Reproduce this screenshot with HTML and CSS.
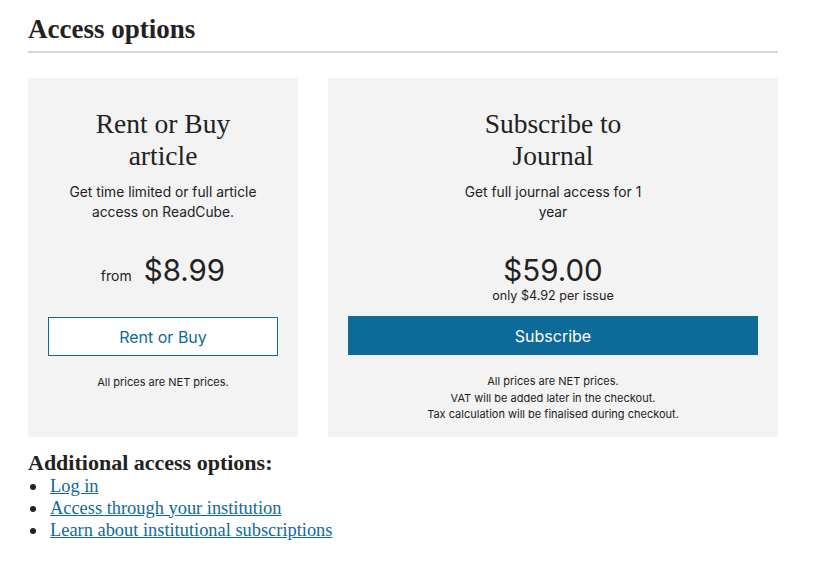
FILE: index.html
```html
<!DOCTYPE html>
<html>
<head>
<meta charset="utf-8">
<link rel="stylesheet" href="styles.css">
</head>
<body>
<section class="access">
  <h2 class="access-title">Access options</h2>
  <div class="cards">
    <div class="card card-rent">
      <h3 class="card-title">Rent or Buy<br>article</h3>
      <p class="card-desc">Get time limited or full article<br>access on ReadCube.</p>
      <div class="price-block">
        <div class="price-line"><span class="from">from</span><span class="price">$8.99</span></div>
      </div>
      <a class="btn btn-outline" href="#">Rent or Buy</a>
      <p class="note">All prices are NET prices.</p>
    </div>
    <div class="card card-sub">
      <h3 class="card-title">Subscribe to<br>Journal</h3>
      <p class="card-desc">Get full journal access for 1<br>year</p>
      <div class="price-block">
        <div class="price-line"><span class="price">$59.00</span></div>
        <div class="per-issue">only $4.92 per issue</div>
      </div>
      <a class="btn btn-solid" href="#">Subscribe</a>
      <p class="note">All prices are NET prices.<br>VAT will be added later in the checkout.<br>Tax calculation will be finalised during checkout.</p>
    </div>
  </div>
  <h3 class="more-title">Additional access options:</h3>
  <ul class="more-list">
    <li><a href="#">Log in</a></li>
    <li><a href="#">Access through your institution</a></li>
    <li><a href="#">Learn about institutional subscriptions</a></li>
  </ul>
</section>
</body>
</html>
```

FILE: styles.css
```css
* { box-sizing: border-box; }
html, body { margin: 0; padding: 0; background: #fff; }
body { color: #222; font-family: "Liberation Serif", serif; }

.access {
  width: 750px;
  margin-left: 28px;
  padding-top: 13px;
}

.access-title {
  margin: 0;
  font-size: 27px;
  line-height: 33px;
  font-weight: 700;
  padding-bottom: 5px;
  border-bottom: 2px solid #d5d5d5;
}

.cards {
  display: flex;
  gap: 30px;
  margin-top: 25px;
}

.card {
  background: #f3f3f3;
  padding: 30px 20px 14px;
  text-align: center;
  display: flex;
  flex-direction: column;
}
.card-rent { width: 270px; }
.card-sub { width: 450px; }

.card-title {
  margin: 0;
  font-size: 27.5px;
  line-height: 32px;
  font-weight: 400;
  color: #222;
}

.card-desc {
  margin: 10px 0 0;
  font-family: Inter, "Liberation Sans", sans-serif;
  font-size: 13.8px;
  line-height: 20px;
  color: #222;
}

.price-block {
  margin-top: 32px;
  height: 52px;
  font-family: Inter, "Liberation Sans", sans-serif;
}
.price-line {
  line-height: 32px;
  display: flex;
  justify-content: center;
  align-items: baseline;
  gap: 12px;
}
.from { font-size: 14px; }
.price { font-size: 29.5px; }
.per-issue {
  font-size: 12.6px;
  line-height: 20px;
}

.btn {
  display: flex;
  align-items: center;
  justify-content: center;
  height: 39px;
  font-family: Inter, "Liberation Sans", sans-serif;
  font-size: 16px;
  text-decoration: none;
}
.card-rent .btn { margin-top: 11px; }
.card-sub .btn { margin-top: 10px; }
.btn-outline {
  border: 1px solid #0e6a99;
  background: #fff;
  color: #0e6a99;
}
.btn-solid {
  background: #0e6a99;
  color: #fff;
}

.note {
  margin: 18px 0 0;
  font-family: Inter, "Liberation Sans", sans-serif;
  font-size: 11px;
  line-height: 16.5px;
  color: #222;
}

.more-title {
  margin: 14px 0 0;
  font-size: 22px;
  line-height: 24px;
  font-weight: 700;
}

.more-list {
  margin: 0;
  padding: 0;
  list-style: none;
  font-size: 18.4px;
  line-height: 22px;
}
.more-list li {
  display: flex;
  align-items: center;
  height: 22px;
}
.more-list li::before {
  content: "";
  width: 6px;
  height: 6px;
  border-radius: 50%;
  background: #222;
  margin: 2px 14px 0 2px;
  flex: none;
}
.more-list a {
  color: #0e6a99;
  text-decoration: underline;
}
```
